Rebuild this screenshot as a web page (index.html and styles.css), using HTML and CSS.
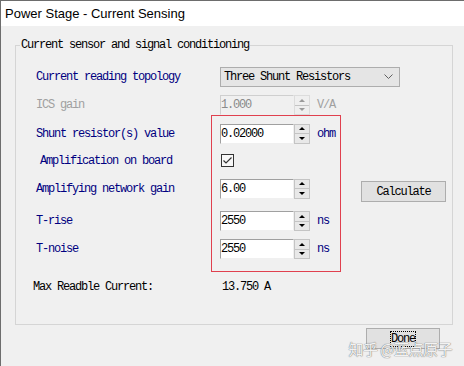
FILE: index.html
```html
<!DOCTYPE html>
<html>
<head>
<meta charset="utf-8">
<title>Power Stage - Current Sensing</title>
<link rel="stylesheet" href="styles.css">
</head>
<body>
<div class="m-win">
	<div class="m-title">Power Stage - Current Sensing</div>
	<fieldset class="m-group">
		<legend>Current sensor and signal conditioning</legend>
		<div class="m-form">
			<div class="lbl">Current reading topology</div>
			<div class="combo"><span>Three Shunt Resistors</span><svg width="9" height="5" viewBox="0 0 9 5"><polyline points="0.5,0.5 4.5,4.5 8.5,0.5" fill="none" stroke="#606060" stroke-width="1"/></svg></div>

			<div class="lbl off">ICS gain</div>
			<div class="spin off"><div class="txt">1.000</div><div class="arr"><i class="up"></i><i class="dn"></i></div></div>
			<div class="unit off">V/A</div>

			<div class="lbl">Shunt resistor(s) value</div>
			<div class="spin"><div class="txt">0.02000</div><div class="arr"><i class="up"></i><i class="dn"></i></div></div>
			<div class="unit">ohm</div>

			<div class="lbl ind">Amplification on board</div>
			<div class="chk"><svg width="11" height="11" viewBox="0 0 11 11"><polyline points="1.5,5.5 4,8 9.5,2.5" fill="none" stroke="#333" stroke-width="1.2"/></svg></div>

			<div class="lbl">Amplifying network gain</div>
			<div class="spin"><div class="txt">6.00</div><div class="arr"><i class="up"></i><i class="dn"></i></div></div>
			<button class="btn calc">Calculate</button>

			<div class="lbl">T-rise</div>
			<div class="spin"><div class="txt">2550</div><div class="arr"><i class="up"></i><i class="dn"></i></div></div>
			<div class="unit">ns</div>

			<div class="lbl">T-noise</div>
			<div class="spin"><div class="txt">2550</div><div class="arr"><i class="up"></i><i class="dn"></i></div></div>
			<div class="unit">ns</div>

			<div class="lbl max">Max Readble Current:</div>
			<div class="val">13.750 A</div>

			<div class="m-mark"></div>
		</div>
	</fieldset>
	<div class="m-foot"><button class="btn done"><span>Done</span></button></div>
	<div class="m-wmark">知乎 @蓝点原子</div>
</div>
</body>
</html>
```
FILE: styles.css
```css
*{margin:0;padding:0;box-sizing:border-box;}
body{width:464px;height:366px;overflow:hidden;background:#f0f0f0;font:12px/14px "Liberation Mono",monospace;letter-spacing:-1.2px;color:#000;}

/** 窗口 **/
.m-win{position:relative;height:366px;border-left:1px solid #6d6d6d;border-top:1px solid #6d6d6d;background:#f0f0f0;}
.m-title{height:25px;padding-left:4px;background:#fff;font:13px/25px "Liberation Sans",Arial,sans-serif;letter-spacing:0;color:#000;}

/** 分组框 **/
.m-group{margin:12px 11px 0 14px;padding:10px 0 10px 4px;border:1px solid #d5d5d5;}
.m-group legend{padding:0 1px;line-height:14px;color:#000;}

.m-form{position:relative;margin-left:16px;display:grid;grid-template-columns:184px 91px 50px 85px;grid-template-rows:29px 28px 29px 25px 31px 34px 22px 54px;align-items:center;}
.m-form .lbl{grid-column:1;color:#000080;}
.m-form .lbl.off{color:#a0a0a0;}
.m-form .lbl.ind{padding-left:4px;}
.m-form .lbl.max{margin-left:-3px;color:#000;}
.m-form .unit{padding-left:6px;color:#000080;}
.m-form .unit.off{color:#a0a0a0;}
.m-form .val{padding-left:2px;}

/** 下拉框 **/
.combo{grid-column:span 2;display:flex;align-items:center;justify-content:space-between;width:180px;height:20px;padding:0 6px 0 3px;border:1px solid #adadad;background:#e5e5e5;}
.combo svg{display:block;}

/** 数值框 **/
.spin{display:flex;width:90px;height:20px;}
.spin .txt{flex:1;line-height:18px;background:#fff;border:1px solid;border-color:#a0a0a0 #f0f0f0 #f0f0f0 #a0a0a0;}
.spin .arr{display:flex;flex-direction:column;width:16px;border:1px solid #c4c4c4;background:#e8e8e8;}
.spin .arr i{flex:1;display:flex;align-items:center;justify-content:center;}
.spin .arr i.dn{border-top:1px solid #c4c4c4;}
.spin .arr i:before{content:'';display:block;border-left:3px solid transparent;border-right:3px solid transparent;}
.spin .arr i.up:before{border-bottom:3px solid #000;}
.spin .arr i.dn:before{border-top:3px solid #000;}
.spin.off .txt{background:#f0f0f0;border-color:#cfcfcf #f0f0f0 #f0f0f0 #cfcfcf;color:#8a8a8a;}
.spin.off .arr{border-color:#dcdcdc;background:#efefef;}
.spin.off .arr i.up:before{border-bottom-color:#9a9a9a;}
.spin.off .arr i.dn:before{border-top-color:#9a9a9a;}

/** 复选框 **/
.chk{width:13px;height:13px;margin-left:1px;border:1px solid #333;background:#f7f7f7;}
.chk svg{display:block;}

/** 按钮 **/
.btn{height:21px;border:1px solid #adadad;background:#e1e1e1;font:12px/14px "Liberation Mono",monospace;letter-spacing:-1.2px;color:#000;}
.calc{grid-column:4;width:85px;margin-top:6px;}
.m-foot{display:flex;justify-content:flex-end;padding:3px 24px 0 0;}
.done{width:74px;}
.done span{outline:1px dotted #000;outline-offset:0;}

/** 标注 **/
.m-mark{position:absolute;left:175px;top:53px;width:130px;height:157px;border:1px solid #e0404f;}
.m-wmark{position:absolute;right:12px;bottom:8px;font:15px/18px "Noto Sans CJK SC",sans-serif;letter-spacing:-0.5px;color:rgba(255,255,255,.92);text-shadow:0 0 1px #7a7a7a,0 0 1px #7a7a7a;}
```
